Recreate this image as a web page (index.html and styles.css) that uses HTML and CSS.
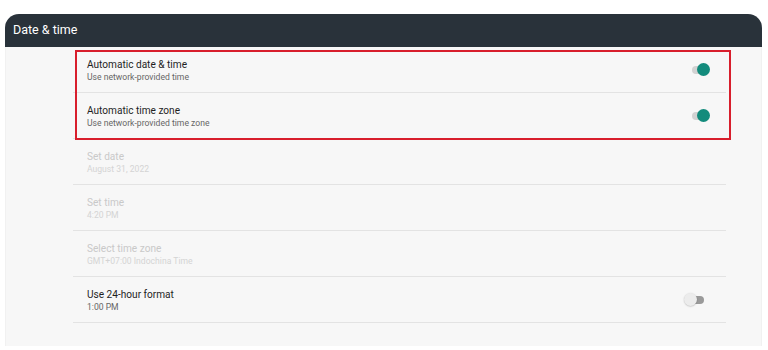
FILE: index.html
```html
<!DOCTYPE html>
<html>
<head>
<meta charset="utf-8">
<link rel="stylesheet" href="styles.css">
</head>
<body>
<div class="panel">
  <div class="header"><span class="title">Date &amp; time</span></div>
  <div class="content">
    <div class="list">
      <div class="row">
        <div class="text"><div class="t">Automatic date &amp; time</div><div class="s">Use network-provided time</div></div>
        <div class="switch on"><span class="track"></span><span class="thumb"></span></div>
      </div>
      <div class="row">
        <div class="text"><div class="t">Automatic time zone</div><div class="s">Use network-provided time zone</div></div>
        <div class="switch on"><span class="track"></span><span class="thumb"></span></div>
      </div>
      <div class="row disabled">
        <div class="text"><div class="t">Set date</div><div class="s">August 31, 2022</div></div>
      </div>
      <div class="row disabled">
        <div class="text"><div class="t">Set time</div><div class="s">4:20 PM</div></div>
      </div>
      <div class="row disabled">
        <div class="text"><div class="t">Select time zone</div><div class="s">GMT+07:00 Indochina Time</div></div>
      </div>
      <div class="row">
        <div class="text"><div class="t">Use 24-hour format</div><div class="s">1:00 PM</div></div>
        <div class="switch off"><span class="track"></span><span class="thumb"></span></div>
      </div>
    </div>
    <div class="highlight"></div>
  </div>
</div>
</body>
</html>
```
FILE: styles.css
```css
html, body {
  margin: 0;
  padding: 0;
  background: #ffffff;
  font-family: Roboto, "Liberation Sans", sans-serif;
}
.panel {
  margin: 14px 6px 0 5px;
  width: 757px;
}
.header {
  height: 33px;
  background: #29323a;
  border-radius: 14px 14px 0 0;
  display: flex;
  align-items: center;
  padding-left: 8px;
  padding-bottom: 3px;
  box-sizing: border-box;
}
.title {
  color: #ffffff;
  font-size: 12.5px;
}
.content {
  position: relative;
  background: #f7f7f7;
  border-left: 1px solid #f1f1f1;
  border-right: 1px solid #f1f1f1;
  height: 299px;
  padding: 0 35px 0 67px;
}
.row {
  height: 46px;
  box-sizing: border-box;
  border-bottom: 1px solid #e3e3e3;
  display: flex;
  align-items: center;
  justify-content: space-between;
  padding-left: 14px;
  padding-right: 16px;
}
.text {
  display: flex;
  flex-direction: column;
  padding-top: 1px;
}
.t {
  font-size: 10.1px;
  color: #1f1f1f;
  line-height: 13px;
}
.s {
  font-size: 8.6px;
  color: #666666;
  line-height: 12px;
}
.disabled .t { color: #c9c9c9; }
.disabled .s { color: #d4d4d4; }
.switch {
  position: relative;
  width: 20px;
  height: 14px;
}
.track {
  position: absolute;
  left: 2px;
  top: 3px;
  width: 16px;
  height: 8px;
  border-radius: 4px;
  background: #d2d2d2;
}
.thumb {
  position: absolute;
  top: 0;
  width: 13px;
  height: 13px;
  border-radius: 50%;
}
.switch.on .thumb {
  left: 7px;
  background: #138b7c;
}
.switch.off .track {
  background: #9a9a9a;
  left: 1px;
  width: 13px;
}
.switch.off .thumb {
  left: -6px;
  background: #ececec;
  box-shadow: 0 0.5px 1.5px rgba(0,0,0,0.25);
}
.highlight {
  position: absolute;
  left: 69px;
  top: 3px;
  width: 652px;
  height: 86px;
  border: 2px solid #d81e2c;
}
```
